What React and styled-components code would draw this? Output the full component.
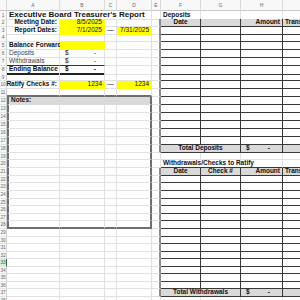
import React from "react";
import styled, { createGlobalStyle } from "styled-components";

const GlobalStyle = createGlobalStyle`
  html, body {
    margin: 0;
    padding: 0;
    background: #fff;
  }
  body {
    font-family: "Liberation Sans", Arial, sans-serif;
    overflow: hidden;
  }
`;

const YELLOW = "#ffff00";
const GRAY = "#d9d9d9";
const GRID = "#e1e1e1";
const DARK = "1px solid #383838";
const EDGE = "2px solid #8c8c8c";
const BOX = "2px solid #6e6e6e";

const COLS = ["A", "B", "C", "D", "E", "F", "G", "H", "I"];
const TEMPLATE = "7px 53px 45px 12px 35px 9px 40px 40px 42px 40px";
const LAST_ROW = 38;

// row tops drift a little as Excel rounds row heights at this zoom
const ANCHORS = [[1, 11], [12, 97], [18, 145], [21, 168], [29, 229], [37, 289], [40, 312]];
const rowTop = (r) => {
  for (let i = 0; i < ANCHORS.length - 1; i++) {
    const [r0, y0] = ANCHORS[i];
    const [r1, y1] = ANCHORS[i + 1];
    if (r <= r1) return Math.round(y0 + ((r - r0) * (y1 - y0)) / (r1 - r0));
  }
  return 0;
};

const Sheet = styled.div`
  width: 300px;
  height: 300px;
  overflow: hidden;
  background: #fff;
  color: #111;
`;

const Row = styled.div`
  display: grid;
  grid-template-columns: ${TEMPLATE};
  height: ${(p) => p.$h}px;
`;

const ColHead = styled.div`
  box-sizing: border-box;
  display: flex;
  align-items: center;
  justify-content: center;
  overflow: hidden;
  background: #f8f8f8;
  border-right: 1px solid #dadada;
  border-bottom: 1px solid #c6c6c6;
  font-size: 5px;
  color: #6a6a6a;
`;

const RowNum = styled.div`
  box-sizing: border-box;
  display: flex;
  align-items: center;
  justify-content: center;
  background: ${(p) => (p.$active ? "#d7ebdf" : "#f8f8f8")};
  border-right: ${(p) => (p.$active ? "1px solid #217346" : "1px solid #d0d0d0")};
  border-bottom: 1px solid #e4e4e4;
  font-size: 4.8px;
  letter-spacing: -0.2px;
  color: ${(p) => (p.$active ? "#1e6b41" : "#666")};
`;

const Cell = styled.div`
  grid-column: span ${(p) => p.$span || 1};
  box-sizing: border-box;
  min-width: 0;
  display: flex;
  align-items: center;
  justify-content: ${(p) =>
    p.$money
      ? "space-between"
      : p.$align === "right"
      ? "flex-end"
      : p.$align === "center"
      ? "center"
      : "flex-start"};
  padding: ${(p) => (p.$money ? `0 ${p.$padR}px 0 5px` : "0 2px")};
  white-space: nowrap;
  line-height: 1;
  font-size: ${(p) => p.$size || 6.5}px;
  font-weight: ${(p) => (p.$bold ? 700 : 400)};
  color: ${(p) => (p.$muted ? "#3d3d3d" : "#111")};
  background: ${(p) => p.$fill || "transparent"};
  border-left: ${(p) => p.$bl || "none"};
  border-right: ${(p) => p.$br || `1px solid ${p.$fill || GRID}`};
  border-bottom: ${(p) => p.$bb || `1px solid ${p.$fill || GRID}`};
`;

// cell contents and formats, keyed by row then column
const sheet = {};
const set = (r, c, props) => {
  sheet[r] = sheet[r] || {};
  sheet[r][c] = { ...(sheet[r][c] || {}), ...props };
};
const each = (from, to, fn) => {
  for (let r = from; r <= to; r++) fn(r);
};

// summary block
set(1, "A", { text: "Executive Board Treasurer's Report", bold: true, size: 8, span: 4 });
set(2, "A", { text: "Meeting Date:", bold: true, align: "right" });
set(2, "B", { text: "8/5/2025", fill: YELLOW, align: "right" });
set(3, "A", { text: "Report Dates:", bold: true, align: "right" });
set(3, "B", { text: "7/1/2025", fill: YELLOW, align: "right" });
set(3, "C", { text: "—", align: "center" });
set(3, "D", { text: "7/31/2025", fill: YELLOW, align: "right" });
set(5, "A", { text: "Balance Forward", bold: true });
set(5, "B", { fill: YELLOW });
set(6, "A", { text: "Deposits", muted: true });
set(6, "B", { money: true, padR: 8 });
set(7, "A", { text: "Withdrawals", muted: true });
set(7, "B", { money: true, padR: 8 });
set(8, "A", { text: "Ending Balance", bold: true });
set(8, "B", { money: true, padR: 8, bold: true });
["A", "B"].forEach((c) => {
  set(7, c, { bb: "1px solid #333" });
  set(8, c, { bb: "2px solid #222" });
});
set(10, "A", { text: "Ratify Checks #:", bold: true, align: "right" });
set(10, "B", { text: "1234", fill: YELLOW, align: "right" });
set(10, "C", { text: "—", align: "center" });
set(10, "D", { text: "1234", fill: YELLOW, align: "right" });

// notes box
["A", "B", "C", "D"].forEach((c) => {
  set(11, c, { bb: BOX });
  set(12, c, { fill: GRAY });
  set(28, c, { bb: BOX });
});
set(12, "A", { text: "Notes:", bold: true });
each(12, 28, (r) => {
  set(r, "A", { bl: BOX });
  set(r, "D", { br: BOX });
});

// ledger tables on the right
const ledger = (top, header, bottom, totalLabel) => {
  ["F", "G", "H", "I"].forEach((c) => {
    set(top - 1, c, { bb: DARK });
    set(top, c, { fill: GRAY });
    set(bottom, c, { fill: GRAY });
  });
  each(top, bottom, (r) => {
    set(r, "E", { br: EDGE });
    ["F", "G", "H", "I"].forEach((c) => set(r, c, { bb: DARK }));
    ["F", "G", "H"].forEach((c) => set(r, c, { br: DARK }));
  });
  Object.entries(header).forEach(([c, cell]) => set(top, c, { bold: true, ...cell }));
  set(bottom, "F", { text: totalLabel, bold: true, align: "center", span: 2 });
  set(bottom, "H", { money: true, padR: 12, bold: true });
};

set(1, "F", { text: "Deposits", bold: true });
ledger(
  2,
  { F: { text: "Date", align: "center" }, H: { text: "Amount", align: "right" }, I: { text: "Trans" } },
  18,
  "Total Deposits"
);

set(20, "F", { text: "Withdrawals/Checks to Ratify", bold: true, span: 3 });
ledger(
  21,
  {
    F: { text: "Date", align: "center" },
    G: { text: "Check #", align: "center" },
    H: { text: "Amount", align: "right" },
    I: { text: "Trans" },
  },
  37,
  "Total Withdrawals"
);

const renderCells = (r) => {
  const cells = [];
  const row = sheet[r] || {};
  for (let i = 0; i < COLS.length; i++) {
    const c = COLS[i];
    const cell = row[c] || {};
    cells.push(
      <Cell
        key={c}
        $span={cell.span}
        $align={cell.align}
        $bold={cell.bold}
        $muted={cell.muted}
        $size={cell.size}
        $fill={cell.fill}
        $money={cell.money}
        $padR={cell.padR}
        $bl={cell.bl}
        $br={cell.br}
        $bb={cell.bb}
      >
        {cell.money ? (
          <>
            <span>$</span>
            <span>-</span>
          </>
        ) : (
          cell.text
        )}
      </Cell>
    );
    if (cell.span) i += cell.span - 1;
  }
  return cells;
};

export default function App() {
  const rows = [];
  for (let r = 1; r <= LAST_ROW; r++) rows.push(r);

  return (
    <>
      <GlobalStyle />
      <Sheet>
        <Row $h={rowTop(1)}>
          <ColHead />
          {COLS.map((c) => (
            <ColHead key={c}>{c === "I" ? "" : c}</ColHead>
          ))}
        </Row>
        {rows.map((r) => (
          <Row key={r} $h={rowTop(r + 1) - rowTop(r)}>
            <RowNum $active={r === 33}>{r}</RowNum>
            {renderCells(r)}
          </Row>
        ))}
      </Sheet>
    </>
  );
}
